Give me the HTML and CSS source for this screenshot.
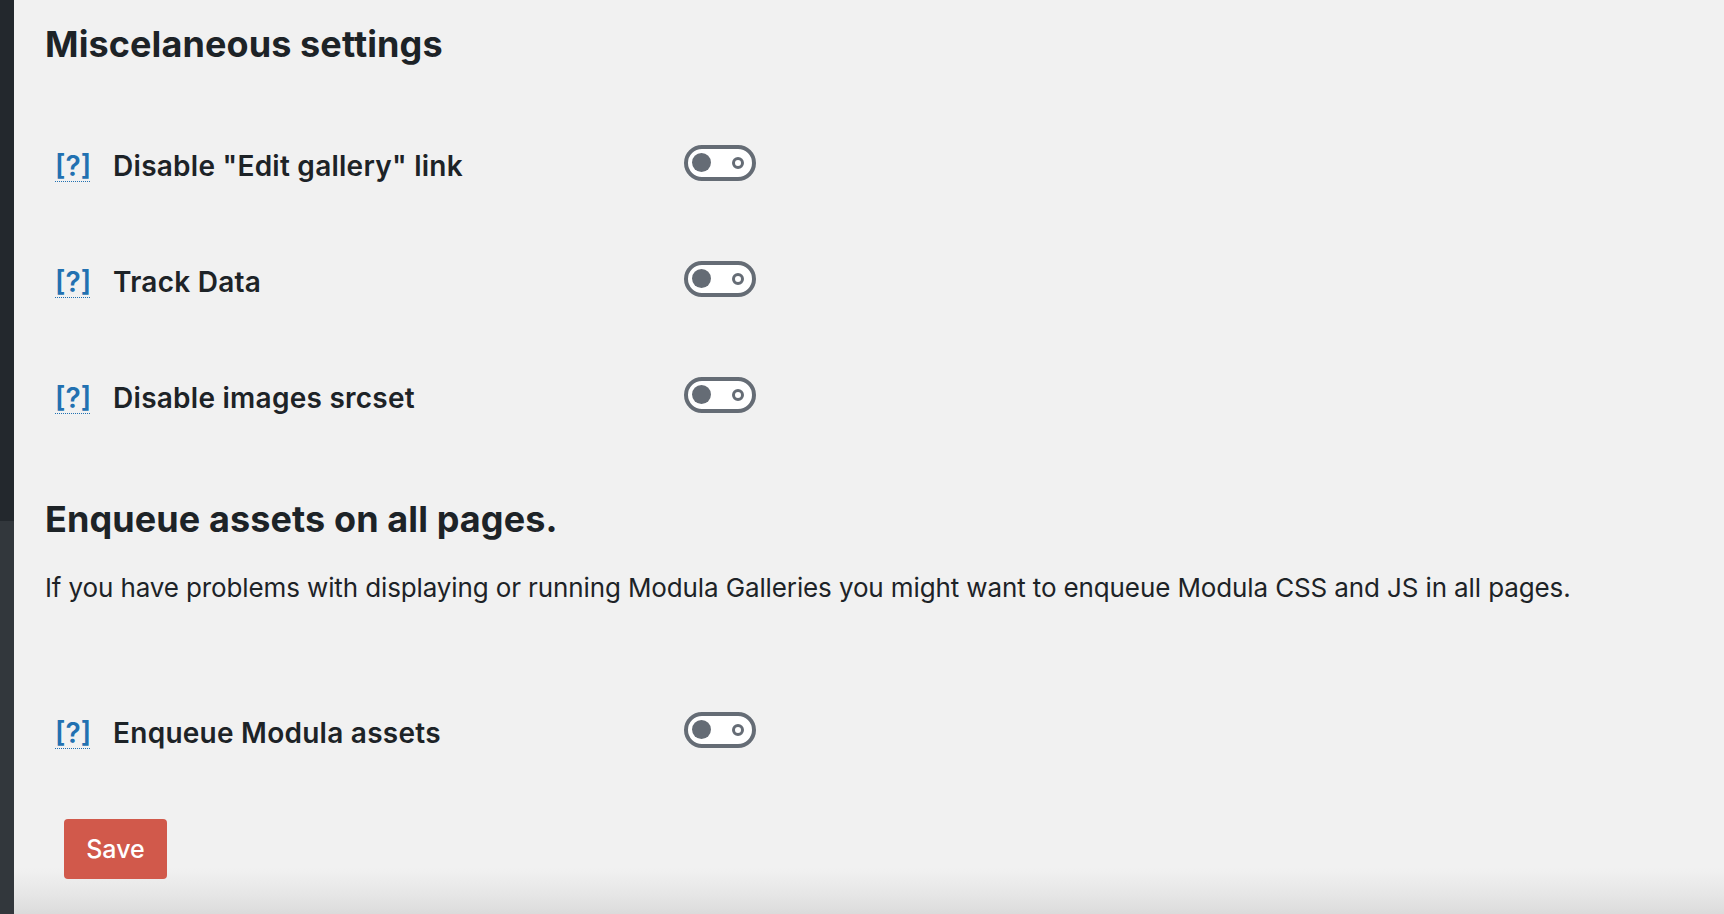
FILE: index.html
```html
<!DOCTYPE html>
<html lang="en">
<head>
<meta charset="utf-8">
<title>Miscelaneous settings</title>
<link rel="stylesheet" href="styles.css">
</head>
<body>
<div class="page">
  <div class="sidebar">
    <div class="sidebar-top"></div>
    <div class="sidebar-bottom"></div>
  </div>
  <main class="main">
    <h2 class="section-title first">Miscelaneous settings</h2>
    <div class="form-table">
      <div class="row">
        <div class="label-cell"><a class="help" href="#">[?]</a><span class="label">Disable "Edit gallery" link</span></div>
        <div class="field-cell"><span class="toggle"><span class="knob"></span><span class="ring"></span></span></div>
      </div>
      <div class="row">
        <div class="label-cell"><a class="help" href="#">[?]</a><span class="label">Track Data</span></div>
        <div class="field-cell"><span class="toggle"><span class="knob"></span><span class="ring"></span></span></div>
      </div>
      <div class="row">
        <div class="label-cell"><a class="help" href="#">[?]</a><span class="label">Disable images srcset</span></div>
        <div class="field-cell"><span class="toggle"><span class="knob"></span><span class="ring"></span></span></div>
      </div>
    </div>
    <h2 class="section-title second">Enqueue assets on all pages.</h2>
    <p class="description">If you have problems with displaying or running Modula Galleries you might want to enqueue Modula CSS and JS in all pages.</p>
    <div class="form-table lower">
      <div class="row">
        <div class="label-cell"><a class="help" href="#">[?]</a><span class="label">Enqueue Modula assets</span></div>
        <div class="field-cell"><span class="toggle"><span class="knob"></span><span class="ring"></span></span></div>
      </div>
    </div>
    <div class="actions"><button class="save" type="button">Save</button></div>
  </main>
</div>
</body>
</html>
```
FILE: styles.css
```css
* { box-sizing: border-box; }
html, body { margin: 0; padding: 0; }
body {
  font-family: Inter, "Noto Sans", "Liberation Sans", sans-serif;
  color: #1d2327;
  background: #f1f1f1;
  overflow: hidden;
}
.page {
  display: flex;
  height: 914px;
}
.sidebar {
  width: 14px;
  flex: 0 0 14px;
  display: flex;
  flex-direction: column;
}
.sidebar-top { height: 521px; background: #23282d; }
.sidebar-bottom { flex: 1; background: #32373c; }
.main {
  flex: 1;
  padding-left: 31px;
  background: linear-gradient(to bottom, #f1f1f1 0, #f1f1f1 868px, #e6e6e6 895px, #dbdbdb 914px);
}
.section-title {
  margin: 0;
  font-size: 36px;
  line-height: 44px;
  font-weight: 700;
  color: #1d2327;
  letter-spacing: 0.1px;
}
.section-title.first { padding-top: 22px; }
.form-table { margin-top: 40px; }
.form-table.lower { margin-top: 67px; }
.row {
  display: flex;
  align-items: center;
  height: 116px;
  padding-left: 10px;
}
.label-cell {
  width: 629px;
  display: flex;
  align-items: center;
  padding-top: 4px;
  font-size: 28px;
  line-height: 34px;
  font-weight: 600;
  letter-spacing: 0.25px;
}
.help {
  color: #2271b1;
  text-decoration: underline dotted 1px;
  text-underline-offset: 5px;
  margin-right: 22px;
  font-weight: 600;
  letter-spacing: 0;
}
.label { color: #1d2327; }
.field-cell { display: flex; align-items: center; margin-top: -3px; }
.toggle {
  position: relative;
  display: block;
  width: 72px;
  height: 36px;
  border: 4px solid #656c75;
  border-radius: 18px;
  background: #fff;
}
.knob {
  position: absolute;
  left: 4px;
  top: 4.5px;
  width: 19px;
  height: 19px;
  border-radius: 50%;
  background: #656c75;
}
.ring {
  position: absolute;
  right: 8px;
  top: 8px;
  width: 12px;
  height: 12px;
  border-radius: 50%;
  border: 3px solid #656c75;
  background: #fff;
}
.section-title.second { margin-top: 43px; }
.description {
  margin: 29px 0 0;
  font-size: 26px;
  line-height: 36px;
  font-weight: 400;
  color: #1d2327;
  letter-spacing: -0.12px;
}
.actions { margin-top: 30px; padding-left: 19px; }
.save {
  width: 103px;
  height: 60px;
  border: 0;
  border-radius: 4px;
  background: #d1594b;
  color: #fff;
  font-family: inherit;
  font-size: 25px;
  font-weight: 500;
  padding: 0;
  cursor: pointer;
}
```
